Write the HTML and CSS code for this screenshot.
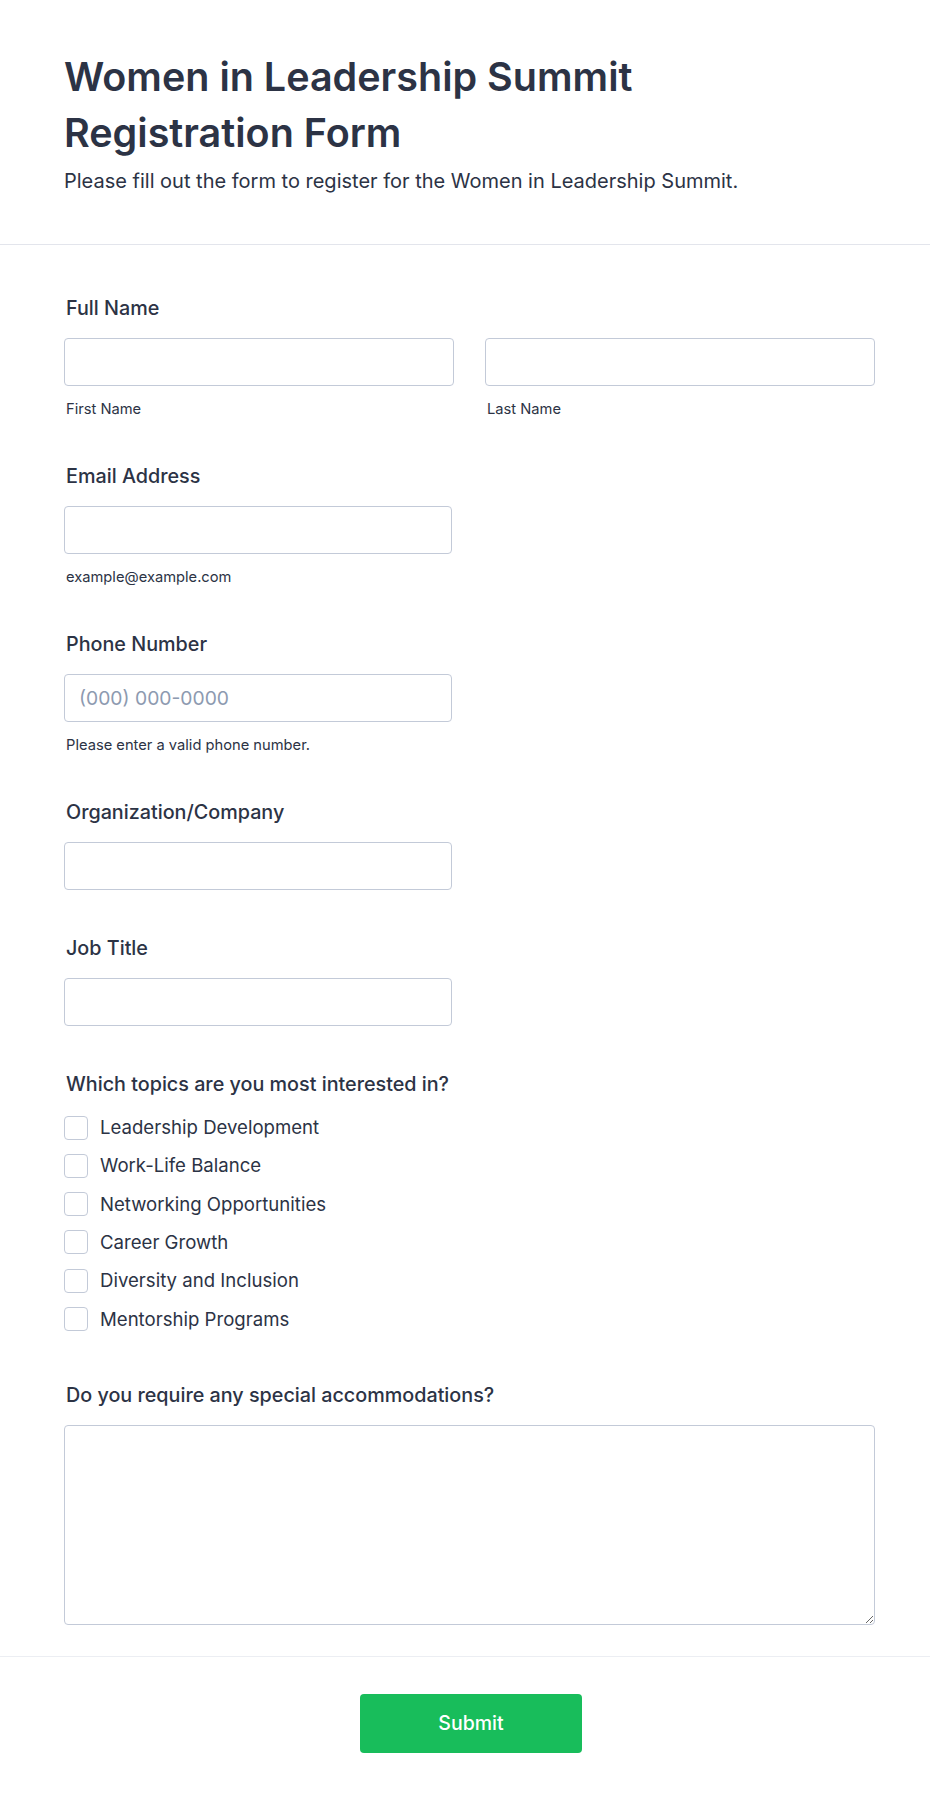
FILE: index.html
```html
<!DOCTYPE html>
<html lang="en">
<head>
<meta charset="UTF-8" />
<meta name="viewport" content="width=device-width, initial-scale=1" />
<title>Women in Leadership Summit Registration Form</title>
<link rel="stylesheet" href="styles.css">
</head>
<body>
<form class="form-all">
  <!-- Header -->
  <div class="form-header">
    <h1 class="form-title">Women in Leadership Summit Registration Form</h1>
    <p class="form-subtitle">Please fill out the form to register for the Women in Leadership Summit.</p>
  </div>

  <div class="form-body">
    <!-- Full Name -->
    <div class="field">
      <label class="field-label">Full Name</label>
      <div class="name-row">
        <div>
          <input class="text-input" type="text">
          <span class="sublabel">First Name</span>
        </div>
        <div>
          <input class="text-input" type="text">
          <span class="sublabel">Last Name</span>
        </div>
      </div>
    </div>

    <!-- Email -->
    <div class="field">
      <label class="field-label">Email Address</label>
      <input class="text-input half" type="email">
      <span class="sublabel">example@example.com</span>
    </div>

    <!-- Phone -->
    <div class="field">
      <label class="field-label">Phone Number</label>
      <input class="text-input half" type="tel" placeholder="(000) 000-0000">
      <span class="sublabel">Please enter a valid phone number.</span>
    </div>

    <!-- Organization -->
    <div class="field no-sub">
      <label class="field-label">Organization/Company</label>
      <input class="text-input half" type="text">
    </div>

    <!-- Job Title -->
    <div class="field no-sub">
      <label class="field-label">Job Title</label>
      <input class="text-input half" type="text">
    </div>

    <!-- Topics -->
    <div class="field topics">
      <label class="field-label">Which topics are you most interested in?</label>
      <div class="options">
        <label class="option"><input class="check" type="checkbox"><span>Leadership Development</span></label>
        <label class="option"><input class="check" type="checkbox"><span>Work-Life Balance</span></label>
        <label class="option"><input class="check" type="checkbox"><span>Networking Opportunities</span></label>
        <label class="option"><input class="check" type="checkbox"><span>Career Growth</span></label>
        <label class="option"><input class="check" type="checkbox"><span>Diversity and Inclusion</span></label>
        <label class="option"><input class="check" type="checkbox"><span>Mentorship Programs</span></label>
      </div>
    </div>

    <!-- Accommodations -->
    <div class="field last">
      <label class="field-label">Do you require any special accommodations?</label>
      <textarea class="text-area"></textarea>
    </div>
  </div>

  <!-- Footer -->
  <div class="form-footer">
    <button class="submit-btn" type="button">Submit</button>
  </div>
</form>
</body>
</html>
```

FILE: styles.css
```css
body {
  margin: 0;
  background: #ffffff;
  font-family: Inter, "Noto Sans", sans-serif;
  color: #2c3345;
}

.form-all {
  width: 930px;
  height: 1802px;
  box-sizing: border-box;
}

/* Header */
.form-header {
  padding: 49px 55px 49px 64px;
  border-bottom: 1px solid #e3e5ec;
}
.form-title {
  margin: 0;
  font-size: 39.5px;
  line-height: 56px;
  font-weight: 600;
  max-width: 600px;
}
.form-subtitle {
  margin: 7px 0 0;
  font-size: 20px;
  line-height: 27px;
}

/* Body */
.form-body {
  padding: 50px 55px 31px 64px;
  border-bottom: 1px solid #eceef3;
}
.field {
  margin-bottom: 43px;
}
.field.no-sub {
  margin-bottom: 45px;
}
.field.topics {
  margin-bottom: 49px;
}
.field.last {
  margin-bottom: 0;
}
.field-label {
  display: block;
  padding-left: 2px;
  font-size: 19.75px;
  line-height: 27px;
  font-weight: 500;
  margin-bottom: 16px;
}

.name-row {
  display: grid;
  grid-template-columns: 1fr 1fr;
  gap: 31px;
}

.text-input {
  display: block;
  width: 100%;
  height: 48px;
  box-sizing: border-box;
  border: 1px solid #c3cad8;
  border-radius: 4px;
  padding: 0 14px;
  font-family: inherit;
  font-size: 19.3px;
  color: #2c3345;
  background: #fff;
}
.text-input.half {
  width: 388px;
}
.text-input::placeholder {
  color: #8d9ab0;
}

.sublabel {
  display: block;
  margin-top: 13px;
  font-size: 14.7px;
  line-height: 21px;
  padding-left: 2px;
}

/* Checkboxes */
.options {
  display: flex;
  flex-direction: column;
  gap: 11.33px;
}
.option {
  display: flex;
  align-items: center;
  height: 27px;
  font-size: 18.6px;
  line-height: 27px;
}
.check {
  appearance: none;
  -webkit-appearance: none;
  width: 24px;
  height: 24px;
  margin: 0 12px 0 0;
  border: 1px solid #c3cad8;
  border-radius: 4px;
  background: #fff;
  flex: none;
}

.text-area {
  display: block;
  width: 100%;
  height: 200px;
  box-sizing: border-box;
  border: 1px solid #c3cad8;
  border-radius: 4px;
  font-family: inherit;
  font-size: 18px;
  padding: 10px 14px;
}

/* Footer */
.form-footer {
  display: flex;
  justify-content: center;
  padding: 37px 52px 0 64px;
}
.submit-btn {
  width: 222px;
  height: 59px;
  border: none;
  border-radius: 4px;
  background: #18bd5b;
  color: #fff;
  font-family: inherit;
  font-size: 19.5px;
  font-weight: 500;
}
```
